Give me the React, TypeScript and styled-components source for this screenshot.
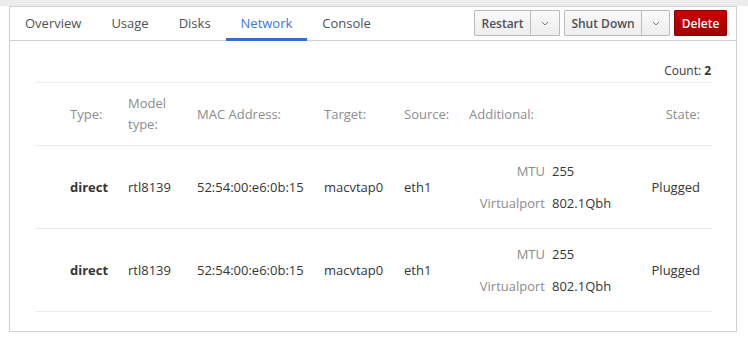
import React from "react";
import styled, { createGlobalStyle } from "styled-components";

const GlobalStyle = createGlobalStyle`
  body {
    margin: 0;
    background: #fff;
    font-family: "Open Sans", "Liberation Sans", sans-serif;
    font-size: 13px;
    color: #363636;
  }
`;

const Page = styled.div`
  width: 748px;
  height: 341px;
  overflow: hidden;
  background: linear-gradient(#ededed 0, #ededed 6px, #fff 6px);
`;

const Panel = styled.div`
  margin: 6px 0 0 9px;
  width: 726px;
  height: 324px;
  border: 1px solid #d1d1d1;
  background: #fff;
`;

const TabBar = styled.div`
  display: flex;
  align-items: stretch;
  height: 33px;
  border-bottom: 1px solid #d1d1d1;
`;

const Tab = styled.div<{ $active?: boolean }>`
  display: flex;
  align-items: center;
  padding: 1px 15px 0;
  font-size: 13px;
  color: ${(p) => (p.$active ? "#3b78d8" : "#4d5258")};
  border-bottom: 3px solid ${(p) => (p.$active ? "#2f6fd4" : "transparent")};
  margin-bottom: -1px;
`;

const Actions = styled.div`
  margin-left: auto;
  display: flex;
  align-items: flex-start;
  gap: 4px;
  padding: 3px 9px 0 0;
`;

const SplitButton = styled.div`
  display: flex;
  height: 26px;
  border: 1px solid #bbb;
  border-radius: 1px;
  background: linear-gradient(#fafafa, #ededed);
  box-sizing: border-box;
`;

const ButtonPart = styled.div<{ $w: number; $caret?: boolean }>`
  width: ${(p) => p.$w}px;
  display: flex;
  align-items: center;
  justify-content: center;
  font-size: 12px;
  font-weight: 600;
  color: #4d5258;
  border-left: ${(p) => (p.$caret ? "1px solid #bbb" : "none")};
`;

const DangerButton = styled.div`
  height: 26px;
  box-sizing: border-box;
  width: 53px;
  display: flex;
  align-items: center;
  justify-content: center;
  font-size: 12px;
  font-weight: 600;
  color: #fff;
  background: linear-gradient(#cc0000, #a30000);
  border: 1px solid #8b0000;
  border-radius: 1px;
`;

const Body = styled.div`
  padding: 0 24px 0 25px;
`;

const Count = styled.div`
  display: flex;
  justify-content: flex-end;
  height: 41px;
  align-items: flex-end;
  padding-bottom: 3px;
  box-sizing: border-box;
  font-size: 12px;
  color: #363636;
  padding-right: 1px;
  b {
    font-weight: 700;
    margin-left: 3px;
  }
`;

const Table = styled.div`
  border-top: 1px solid #ededed;
`;

const Row = styled.div<{ $h: number }>`
  display: grid;
  grid-template-columns: 35px 58px 69px 127px 80px 65px 1fr auto;
  align-items: center;
  height: ${(p) => p.$h}px;
  border-bottom: 1px solid #ededed;
  box-sizing: border-box;
  padding-right: 12px;
`;

const HeadCell = styled.div<{ $right?: boolean }>`
  color: #8b8d8f;
  font-size: 13px;
  line-height: 21px;
  text-align: ${(p) => (p.$right ? "right" : "left")};
`;

const Cell = styled.div<{ $bold?: boolean; $right?: boolean }>`
  font-size: 13px;
  font-weight: ${(p) => (p.$bold ? 700 : 400)};
  color: #363636;
  text-align: ${(p) => (p.$right ? "right" : "left")};
`;

const Extra = styled.div`
  display: grid;
  grid-template-columns: 76px auto;
  column-gap: 7px;
  row-gap: 12px;
  line-height: 20px;
  font-size: 13px;
`;

const ExtraLabel = styled.span`
  color: #8b8d8f;
  text-align: right;
`;

const ExtraValue = styled.span`
  color: #363636;
`;

const Caret = () => (
  <svg width="8" height="5" viewBox="0 0 8 5">
    <path d="M1 1l3 3 3-3" fill="none" stroke="#777" strokeWidth="1" />
  </svg>
);

const rows = [
  { type: "direct", model: "rtl8139", mac: "52:54:00:e6:0b:15", target: "macvtap0", source: "eth1", mtu: "255", vport: "802.1Qbh", state: "Plugged" },
  { type: "direct", model: "rtl8139", mac: "52:54:00:e6:0b:15", target: "macvtap0", source: "eth1", mtu: "255", vport: "802.1Qbh", state: "Plugged" },
];

export default function App() {
  return (
    <Page>
      <GlobalStyle />
      <Panel>
        <TabBar>
          <Tab>Overview</Tab>
          <Tab>Usage</Tab>
          <Tab>Disks</Tab>
          <Tab $active>Network</Tab>
          <Tab>Console</Tab>
          <Actions>
            <SplitButton>
              <ButtonPart $w={55}>Restart</ButtonPart>
              <ButtonPart $w={28} $caret>
                <Caret />
              </ButtonPart>
            </SplitButton>
            <SplitButton>
              <ButtonPart $w={76}>Shut Down</ButtonPart>
              <ButtonPart $w={27} $caret>
                <Caret />
              </ButtonPart>
            </SplitButton>
            <DangerButton>Delete</DangerButton>
          </Actions>
        </TabBar>
        <Body>
          <Count>
            Count:<b>2</b>
          </Count>
          <Table>
            <Row $h={63}>
              <span />
              <HeadCell>Type:</HeadCell>
              <HeadCell>
                Model
                <br />
                type:
              </HeadCell>
              <HeadCell>MAC Address:</HeadCell>
              <HeadCell>Target:</HeadCell>
              <HeadCell>Source:</HeadCell>
              <HeadCell>Additional:</HeadCell>
              <HeadCell $right>State:</HeadCell>
            </Row>
            {rows.map((r, i) => (
              <Row $h={83} key={i}>
                <span />
                <Cell $bold>{r.type}</Cell>
                <Cell>{r.model}</Cell>
                <Cell>{r.mac}</Cell>
                <Cell>{r.target}</Cell>
                <Cell>{r.source}</Cell>
                <Extra>
                  <ExtraLabel>MTU</ExtraLabel>
                  <ExtraValue>{r.mtu}</ExtraValue>
                  <ExtraLabel>Virtualport</ExtraLabel>
                  <ExtraValue>{r.vport}</ExtraValue>
                </Extra>
                <Cell $right>{r.state}</Cell>
              </Row>
            ))}
          </Table>
        </Body>
      </Panel>
    </Page>
  );
}
